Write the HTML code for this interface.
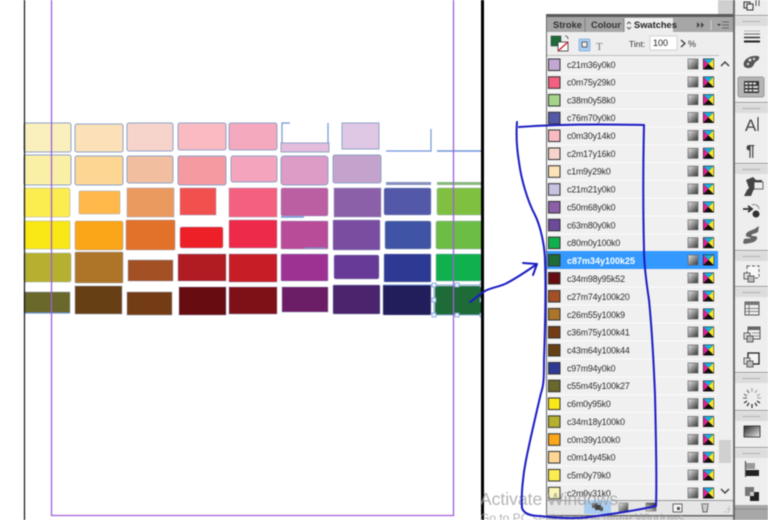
<!DOCTYPE html>
<html><head><meta charset="utf-8">
<style>
html,body{margin:0;padding:0;background:#fff;width:768px;height:520px;overflow:hidden}
svg{display:block;filter:blur(.45px)}
text{font-family:"Liberation Sans",sans-serif}
.n{font-size:8.8px;letter-spacing:-.15px;fill:#2c2c2c}
</style></head><body>
<svg width="768" height="520" viewBox="0 0 768 520" xmlns="http://www.w3.org/2000/svg">
<defs>
<linearGradient id="g" x1="0" y1="0" x2="1" y2="1"><stop offset="0" stop-color="#e8e8e8"/><stop offset="1" stop-color="#333"/></linearGradient>
<linearGradient id="g2" x1="0" y1="1" x2="1" y2="0"><stop offset="0" stop-color="#eee"/><stop offset="1" stop-color="#222"/></linearGradient>
<g id="ic">
<rect x="688" y="-5" width="10" height="10" fill="url(#g)" stroke="#666" stroke-width=".7"/>
<rect x="703" y="-5.500" width="11" height="11" fill="#111"/>
<polygon points="703.500,-5 708.500,0 703.500,5" fill="#e02090"/>
<polygon points="703.500,-5 713.500,-5 708.500,0" fill="#18b0e0"/>
<polygon points="713.500,-5 713.500,5 708.500,0" fill="#f8e820"/>
<polygon points="703.500,5 713.500,5 708.500,0" fill="#111"/>
</g>
</defs>

<!-- page -->
<rect x="0" y="0" width="546" height="520" fill="#fff"/>

<!-- colour grid -->
<g stroke="#8fa3c8" stroke-width="1">
<rect x="24" y="123" width="47" height="29" rx="2" fill="#faf0bd"/>
<rect x="75" y="124" width="48" height="28" rx="2" fill="#fbe0b8"/>
<rect x="127" y="123" width="46" height="28" rx="2" fill="#f6d4cb"/>
<rect x="178" y="123" width="48" height="27" rx="2" fill="#f9bac1"/>
<rect x="229" y="123" width="48" height="27" rx="2" fill="#f5a9bf"/>
<rect x="281" y="143" width="48" height="9" fill="#e4bcdc"/>
<rect x="342" y="123" width="37" height="26" fill="#dfc8e4"/>
<rect x="24" y="155" width="47" height="30" rx="2" fill="#faf0a5"/>
<rect x="75" y="156" width="48" height="29" rx="2" fill="#fdd694"/>
<rect x="127" y="156" width="46" height="27" rx="2" fill="#f1bfa0"/>
<rect x="178" y="156" width="48" height="29" rx="2" fill="#f59aa1"/>
<rect x="231" y="156" width="46" height="26" rx="2" fill="#f4a5bd"/>
<rect x="281" y="156" width="47" height="29" rx="3" fill="#dc9cc6"/>
<rect x="333" y="155" width="48" height="28" rx="2" fill="#c3a3cc"/>
</g>
<g fill="none" stroke="#6f96d8" stroke-width="1.2">
<path d="M290 123H282V143"/><path d="M328 123V143"/>
<path d="M386 151H431V129"/>
</g>
<path d="M437 151H482" stroke="#6f96d8" stroke-width="1.4"/>
<rect x="386" y="182" width="45" height="3" fill="#8890c0"/>
<rect x="437" y="182" width="45" height="3" fill="#88b880"/>

<g stroke="#8f9fc0" stroke-opacity=".55" stroke-width=".8">
<rect x="24" y="188" width="46" height="29" rx="2" fill="#fbec4f"/>
<rect x="79" y="191" width="41" height="23" rx="1" fill="#feb94a"/>
<rect x="127" y="188" width="47" height="29" fill="#eb9a5f"/>
<rect x="180" y="188" width="36" height="27" fill="#f1504f"/>
<rect x="229" y="188" width="48" height="29" fill="#f4607f"/>
<rect x="281" y="188" width="47" height="28" rx="2" fill="#bc5ea2"/>
<rect x="334" y="188" width="47" height="29" fill="#8c60a8"/>
<rect x="384" y="188" width="47" height="27" rx="2" fill="#5358a8"/>
<rect x="437" y="188" width="45" height="27" rx="2" fill="#80c040"/>

<rect x="24" y="221" width="46" height="28" rx="1" fill="#f9e815"/>
<rect x="75" y="221" width="48" height="29" rx="2" fill="#fba518"/>
<rect x="126" y="220" width="49" height="30" rx="1" fill="#e2712a"/>
<rect x="180" y="227" width="43" height="21" rx="2" fill="#ee2027"/>
<rect x="229" y="220" width="48" height="28" rx="1" fill="#ee2a4a"/>
<rect x="281" y="221" width="47" height="28" rx="1" fill="#b84c98"/>
<rect x="333" y="220" width="47" height="30" rx="1" fill="#7a4da0"/>
<rect x="385" y="221" width="46" height="28" rx="2" fill="#3f54a4"/>
<rect x="436" y="221" width="46" height="28" rx="2" fill="#6cbd45"/>

<rect x="24" y="253" width="47" height="29" rx="2" fill="#b5b02f"/>
<rect x="75" y="252" width="48" height="31" rx="1" fill="#ae7529"/>
<rect x="128" y="260" width="45" height="21" fill="#a35024"/>
<rect x="178" y="254" width="48" height="27" fill="#b01c22"/>
<rect x="229" y="254" width="48" height="28" fill="#c71d26"/>
<rect x="281" y="254" width="47" height="27" rx="1" fill="#9e3292"/>
<rect x="334" y="255" width="45" height="24" rx="2" fill="#663a96"/>
<rect x="384" y="254" width="47" height="28" rx="1" fill="#2d3a94"/>
<rect x="436" y="254" width="45" height="27" rx="1" fill="#10b04c"/>

<rect x="24" y="292" width="46" height="21" fill="#6a682a"/>
<rect x="75" y="286" width="47" height="28" fill="#673f14"/>
<rect x="127" y="292" width="45" height="23" fill="#743c14"/>
<rect x="179" y="287" width="47" height="28" fill="#670c0f"/>
<rect x="229" y="287" width="48" height="27" fill="#7e1018"/>
<rect x="282" y="287" width="46" height="25" fill="#6b1e66"/>
<rect x="333" y="285" width="47" height="29" rx="1" fill="#4a256e"/>
<rect x="383" y="285" width="48" height="30" rx="1" fill="#221e5c"/>
<rect x="435" y="286" width="47" height="29" fill="#1e6b38"/>
</g>
<path d="M24 313H70" stroke="#6f96d8" stroke-width="1.2"/>
<path d="M281 217H304" stroke="#6f96d8" stroke-width="1.4"/>
<path d="M305 248H326" stroke="#6f96d8" stroke-width="1"/>
<path d="M383 285H435" stroke="#6f96d8" stroke-width="1"/>
<rect x="434" y="285" width="48" height="30" fill="none" stroke="#8fb0e0" stroke-width="1"/>
<g fill="#eef3fb" stroke="#7da0d8" stroke-width=".8">
<rect x="432" y="283" width="4" height="4"/><rect x="455" y="283" width="4" height="4"/><rect x="480" y="283" width="4" height="4"/>
<rect x="432" y="298" width="4" height="4"/><rect x="480" y="298" width="4" height="4"/>
<rect x="432" y="313" width="4" height="4"/><rect x="455" y="313" width="4" height="4"/><rect x="480" y="313" width="4" height="4"/>
</g>

<!-- page guides -->
<path d="M24.500 0V520" stroke="#111" stroke-width="1.2"/>
<path d="M51.500 0V515.500H453.500V0" fill="none" stroke="#9f5fd8" stroke-width="1.300"/>
<rect x="481" y="0" width="3" height="520" fill="#000"/>

<!-- panel backdrop -->
<rect x="484" y="0" width="62" height="520" fill="#fff"/>
<rect x="718" y="0" width="16" height="14" fill="#cfcfcf"/>
<rect x="546" y="14" width="188" height="3" fill="#5a5a5a"/>
<rect x="546" y="17" width="188" height="15" fill="#a6a6a6"/>
<rect x="546" y="17" width="1" height="499" fill="#666"/>
<rect x="624" y="18" width="49" height="14" fill="#eeeeee"/>
<path d="M585 18V32M624 18V32" stroke="#777" stroke-width=".8"/>
<text x="553" y="28" font-size="9.300" font-weight="bold" fill="#333">Stroke</text>
<text x="591" y="28" font-size="9.300" font-weight="bold" fill="#333">Colour</text>
<text x="634" y="28" font-size="9.300" font-weight="bold" fill="#222">Swatches</text>
<path d="M627 24L629 22L631 24M627 27L629 29L631 27" fill="none" stroke="#333" stroke-width=".8"/>
<path d="M697 22l3 3-3 3zM701 22l3 3-3 3z" fill="#444"/>
<path d="M711 20V30" stroke="#ddd" stroke-width=".8"/>
<path d="M717 24l2 2 2-2z" fill="#333"/>
<path d="M722 22h7M722 25h7M722 28h7" stroke="#555" stroke-width=".8"/>

<rect x="547" y="32" width="172" height="23" fill="#eeeeee"/>
<rect x="719" y="32" width="15" height="23" fill="#eeeeee"/>
<rect x="551" y="36" width="10" height="10" fill="#1e6b38" stroke="#333" stroke-width=".5"/>
<rect x="558" y="42" width="10" height="9" fill="#fff" stroke="#333" stroke-width=".8"/>
<path d="M558 51L568 42" stroke="#d02030" stroke-width="1.400"/>
<path d="M565 36q3 0 3 3" fill="none" stroke="#333" stroke-width=".8"/>
<rect x="579" y="39" width="11" height="12" rx="1" fill="#a9cdf0" stroke="#7ea9dc" stroke-width=".7"/>
<rect x="582" y="42" width="5" height="5" fill="#eee" stroke="#444" stroke-width=".8"/>
<text x="596" y="50" font-size="11" fill="#777" style="font-family:'Liberation Serif',serif">T</text>
<text x="629" y="47" font-size="8.500" fill="#333">Tint:</text>
<rect x="650" y="36" width="27" height="14" fill="#fff" stroke="#c4c4c4" stroke-width=".7"/>
<text x="653" y="46" font-size="9" fill="#222">100</text>
<path d="M681 40l4 3.500-4 3.500" fill="none" stroke="#333" stroke-width="1.200"/>
<text x="688" y="47" font-size="9" fill="#333">%</text>

<!-- list -->
<rect x="547" y="55" width="172" height="445" fill="#f0f0f0"/>
<rect x="547" y="55" width="172" height="1" fill="#bdbdbd"/>
<rect x="719" y="55" width="15" height="445" fill="#efefef"/>
<path d="M547 73.500H718M547 91H718M547 109H718M547 127H718M547 144.700H718M547 162.500H718M547 180.400H718M547 198.300H718M547 216H718M547 234H718M547 287H718M547 305H718M547 323H718M547 341H718M547 359H718M547 377H718M547 394.700H718M547 412.500H718M547 430.400H718M547 448.300H718M547 466H718M547 484H718" stroke="#fbfbfb" stroke-width="1"/>
<rect x="547" y="251" width="171" height="18" fill="#3399ff"/>
<rect x="719" y="440" width="12" height="23" fill="#d0d0d0"/>
<path d="M721 66l4-4 4 4" fill="none" stroke="#444" stroke-width="1.500"/>
<path d="M721 489l4 4 4-4" fill="none" stroke="#444" stroke-width="1.500"/>

<g stroke="#333" stroke-width="1">
<rect x="548.500" y="59" width="11.500" height="11.500" fill="#c4a8d4"/>
<rect x="548.500" y="76.800" width="11.500" height="11.500" fill="#f4607f"/>
<rect x="548.500" y="94.500" width="11.500" height="11.500" fill="#a4d488"/>
<rect x="548.500" y="112.300" width="11.500" height="11.500" fill="#5358a8"/>
<rect x="548.500" y="130" width="11.500" height="11.500" fill="#f9bac1"/>
<rect x="548.500" y="148" width="11.500" height="11.500" fill="#f6d4cb"/>
<rect x="548.500" y="165.800" width="11.500" height="11.500" fill="#fde3b8"/>
<rect x="548.500" y="183.700" width="11.500" height="11.500" fill="#c9c3e3"/>
<rect x="548.500" y="201.500" width="11.500" height="11.500" fill="#8c60a8"/>
<rect x="548.500" y="219.300" width="11.500" height="11.500" fill="#6c4a9c"/>
<rect x="548.500" y="237.100" width="11.500" height="11.500" fill="#10b04c"/>
<rect x="548.500" y="254.500" width="11.500" height="11.500" fill="#1e6b38"/>
<rect x="548.500" y="272.500" width="11.500" height="11.500" fill="#670c0f"/>
<rect x="548.500" y="290.500" width="11.500" height="11.500" fill="#a35024"/>
<rect x="548.500" y="308.500" width="11.500" height="11.500" fill="#ae7529"/>
<rect x="548.500" y="326.500" width="11.500" height="11.500" fill="#743c14"/>
<rect x="548.500" y="344.500" width="11.500" height="11.500" fill="#673f14"/>
<rect x="548.500" y="362.500" width="11.500" height="11.500" fill="#2d3a94"/>
<rect x="548.500" y="380.200" width="11.500" height="11.500" fill="#6a682a"/>
<rect x="548.500" y="398" width="11.500" height="11.500" fill="#f9e815"/>
<rect x="548.500" y="415.900" width="11.500" height="11.500" fill="#b5b02f"/>
<rect x="548.500" y="433.800" width="11.500" height="11.500" fill="#fba518"/>
<rect x="548.500" y="451.500" width="11.500" height="11.500" fill="#fdd694"/>
<rect x="548.500" y="469.500" width="11.500" height="11.500" fill="#fbec4f"/>
<rect x="548.500" y="487.300" width="11.500" height="11.500" fill="#faf5b5"/>
</g>

<text class="n" x="567" y="68">c21m36y0k0</text>
<text class="n" x="567" y="85.500">c0m75y29k0</text>
<text class="n" x="567" y="103.500">c38m0y58k0</text>
<text class="n" x="567" y="121">c76m70y0k0</text>
<text class="n" x="567" y="139">c0m30y14k0</text>
<text class="n" x="567" y="157">c2m17y16k0</text>
<text class="n" x="567" y="174.500">c1m9y29k0</text>
<text class="n" x="567" y="192.500">c21m21y0k0</text>
<text class="n" x="567" y="210.500">c50m68y0k0</text>
<text class="n" x="567" y="228.500">c63m80y0k0</text>
<text class="n" x="567" y="246">c80m0y100k0</text>
<text x="567" y="264" font-size="9" font-weight="bold" fill="#fff">c87m34y100k25</text>
<text class="n" x="567" y="282">c34m98y95k52</text>
<text class="n" x="567" y="300">c27m74y100k20</text>
<text class="n" x="567" y="318">c26m55y100k9</text>
<text class="n" x="567" y="335.500">c36m75y100k41</text>
<text class="n" x="567" y="353.500">c43m64y100k44</text>
<text class="n" x="567" y="371.500">c97m94y0k0</text>
<text class="n" x="567" y="389">c55m45y100k27</text>
<text class="n" x="567" y="407">c6m0y95k0</text>
<text class="n" x="567" y="425">c34m18y100k0</text>
<text class="n" x="567" y="443">c0m39y100k0</text>
<text class="n" x="567" y="460.500">c0m14y45k0</text>
<text class="n" x="567" y="478.500">c5m0y79k0</text>
<text class="n" x="567" y="496.500">c2m0y31k0</text>

<use href="#ic" y="64"/><use href="#ic" y="82"/><use href="#ic" y="99.700"/><use href="#ic" y="117.500"/><use href="#ic" y="135.500"/><use href="#ic" y="153.300"/><use href="#ic" y="171.200"/><use href="#ic" y="189"/><use href="#ic" y="207"/><use href="#ic" y="224.800"/><use href="#ic" y="242.700"/><use href="#ic" y="260"/><use href="#ic" y="278"/><use href="#ic" y="296"/><use href="#ic" y="314"/><use href="#ic" y="332"/><use href="#ic" y="350"/><use href="#ic" y="368"/><use href="#ic" y="386"/><use href="#ic" y="403.700"/><use href="#ic" y="421.500"/><use href="#ic" y="439.500"/><use href="#ic" y="457.300"/><use href="#ic" y="475"/><use href="#ic" y="493"/>

<!-- footer -->
<rect x="547" y="500" width="187" height="15" fill="#e6e6e6"/>
<rect x="547" y="500" width="187" height="1" fill="#999"/>
<rect x="584" y="500" width="27" height="14" fill="#a9cdf0"/>
<rect x="592" y="503" width="6" height="5" fill="#666"/><rect x="595" y="505" width="6" height="5" fill="#444"/><rect x="600" y="507" width="3" height="4" fill="#555"/>
<rect x="619" y="503" width="9" height="9" fill="url(#g)" stroke="#666" stroke-width=".5"/>
<rect x="646" y="503" width="10" height="8" fill="url(#g2)" stroke="#555" stroke-width=".5"/>
<rect x="673" y="504" width="9" height="8" fill="#f4f4f4" stroke="#444" stroke-width=".8"/><rect x="677" y="507" width="3" height="3" fill="#555"/>
<path d="M701 504h8M702 505l1 7h4l1-7" fill="#ccc" stroke="#444" stroke-width=".8"/>
<path d="M724 512h6M727 509h3M729 506v6" stroke="#999" stroke-width=".8" stroke-dasharray="1 1"/>
<rect x="546" y="515" width="188" height="1.500" fill="#666"/>
<rect x="546" y="516.500" width="188" height="4" fill="#d6d6d6"/>

<!-- right dock -->
<rect x="733" y="0" width="2" height="520" fill="#6c6c6c"/>
<rect x="735" y="0" width="33" height="520" fill="#eeeeee"/>
<g fill="#dcdcdc">
<rect x="735" y="17" width="33" height="9"/><rect x="735" y="104" width="33" height="9"/><rect x="735" y="165" width="33" height="9"/><rect x="735" y="252" width="33" height="9"/><rect x="735" y="288" width="33" height="9"/><rect x="735" y="374" width="33" height="9"/><rect x="735" y="412" width="33" height="9"/><rect x="735" y="449" width="33" height="9"/>
</g>
<g stroke="#9a9a9a" stroke-width="1">
<path d="M735 15.500H768M735 102.500H768M735 163.500H768M735 250.500H768M735 286.500H768M735 372.500H768M735 410.500H768M735 447.500H768"/>
</g>
<g stroke="#888" stroke-width="1" stroke-dasharray="1 1">
<path d="M743 21.500H760M743 108.500H760M743 169.500H760M743 256.500H760M743 292.500H760M743 378.500H760M743 416.500H760M743 453.500H760"/>
</g>
<rect x="735" y="505" width="33" height="15" fill="#a8a8a8"/>
<path d="M735 509H768" stroke="#8a8a8a"/>

<!-- dock icons -->
<rect x="744" y="2" width="6" height="6" fill="#ddd" stroke="#333"/><rect x="747" y="4" width="6" height="6" fill="#eee" stroke="#333"/><path d="M756 0V6M759 0V6" stroke="#555"/>
<path d="M744 31H760" stroke="#bbb" stroke-width="1"/><path d="M744 34H760" stroke="#666" stroke-width="1"/><path d="M744 37.500H760" stroke="#333" stroke-width="1.500"/><path d="M744 41.500H760" stroke="#222" stroke-width="2"/>
<path d="M744 66c-2-6 6-11 13-10 4 0 2 4 0 5-3 1-3 5-5 6-3 2-7 1-8-1z" fill="#555"/><circle cx="750" cy="60" r="1.500" fill="#ddd"/><circle cx="754" cy="59" r="1.200" fill="#ddd"/><circle cx="748" cy="64" r="1.200" fill="#ddd"/>
<rect x="738" y="77" width="26" height="20" rx="2" fill="#b4b4b4" stroke="#999"/>
<rect x="744" y="81" width="15" height="12" fill="#333"/>
<path d="M745 82.500h3v2h-3zM749 82.500h3v2h-3zM753 82.500h3v2h-3zM745 86h3v2h-3zM749 86h3v2h-3zM753 86h5v2h-5zM745 89.500h3v2h-3zM749 89.500h3v2h-3zM753 89.500h5v2h-5z" fill="#ddd"/>
<text x="745" y="131" font-size="17" fill="#444">A</text><path d="M758 117V131" stroke="#222" stroke-width="1"/>
<text x="746" y="156" font-size="16" font-weight="bold" fill="#444">¶</text>
<path d="M746 180l7-3 3 3 6 0v8h-7l-2 3-2 5h-7l3-6 2-2z" fill="#444"/><rect x="754" y="182" width="9" height="7" fill="#eee" stroke="#444" stroke-width=".8"/>
<path d="M743 209h8M748 206l4 3-4 3" fill="none" stroke="#333" stroke-width="1.800"/><circle cx="756" cy="214" r="3.500" fill="#333"/><path d="M752 205a5 5 0 0 1 7 4" fill="none" stroke="#888"/>
<path d="M746 236c-1-5 6-5 10-8l3-2-1 6c-3 2-8 2-6 4 3 0 6 0 5 3-2 4-8 4-12 5l-2-1 1-4c3-1 6 0 7-1-2-1-4-1-5-2z" fill="#666"/>
<rect x="747" y="266" width="12" height="12" fill="#f8f8f8" stroke="#555" stroke-dasharray="3 2" stroke-width=".9"/><rect x="744" y="273" width="6" height="6" fill="#ddd" stroke="#555" stroke-width=".9"/><rect x="748" y="276" width="6" height="6" fill="#bbb" stroke="#555" stroke-width=".9"/>
<rect x="745" y="302" width="14" height="13" fill="#eee" stroke="#555" stroke-width="1"/><rect x="745" y="302" width="14" height="3" fill="#777"/><path d="M745 308.500H759M745 311.500H759M749 305V315" stroke="#666" stroke-width=".8"/>
<rect x="748" y="327" width="12" height="12" fill="#eee" stroke="#555"/><rect x="748" y="327" width="12" height="3" fill="#666"/><path d="M752 333H760M752 336H760" stroke="#777" stroke-width=".8"/><rect x="744" y="333" width="6" height="6" fill="#ddd" stroke="#555" stroke-width=".9"/><rect x="747" y="336" width="6" height="6" fill="#bbb" stroke="#555" stroke-width=".9"/>
<rect x="748" y="353" width="11" height="11" fill="#f4f4f4" stroke="#222" stroke-width="1.300"/><rect x="744" y="358" width="6" height="6" fill="#ddd" stroke="#555" stroke-width=".9"/><rect x="747" y="361" width="6" height="6" fill="#bbb" stroke="#555" stroke-width=".9"/>
<g stroke="#555" stroke-width="1.300">
<path d="M752 388v4M757 390l-2 3M760 394l-3 2M761 398h-4" stroke="#aaa"/><path d="M760 403l-3-2M757 406l-2-3M752 408v-4M747 406l2-3M744 403l3-2" stroke="#333"/><path d="M743 398h4M744 394l3 2M747 390l2 3" stroke="#777"/>
</g>
<rect x="744" y="426" width="16" height="11" fill="url(#g2)" stroke="#222" stroke-width=".8" transform="matrix(-1 0 0 1 1504 0)"/>
<path d="M745.500 461V477" stroke="#555" stroke-width="1.200"/><rect x="746" y="463" width="9" height="6" fill="#999"/><rect x="746" y="470" width="13" height="6" fill="#222"/>
<rect x="745" y="487" width="9" height="9" fill="#777"/><rect x="750" y="492" width="9" height="9" fill="#222"/><rect x="750" y="492" width="4" height="4" fill="#ccc"/>

<!-- watermark -->
<text x="480" y="505" font-size="17.500" fill="#9a9a9a" fill-opacity=".75">Activate Windows</text>
<text x="480" y="522" font-size="12" fill="#9a9a9a" fill-opacity=".75">Go to PC settings to activate Windows.</text>

<!-- hand-drawn ink -->
<g fill="none" stroke="#1c1cc4" stroke-width="2" stroke-linecap="round" stroke-linejoin="round">
<path d="M517 122C516 135 517 150 519 162C521 178 527 200 535 215C540 225 545 245 545 262C546 290 545 330 544 360C544 375 544 385 541 393C537 410 530 440 526 460C523 475 521 495 522 508C524 514 531 516 540 516C555 518 575 519 590 517C610 514 635 511 656 506C657 480 656 440 655 395C654 370 652 330 649 300C646 280 644 265 644 250C643 210 643 170 644 125C600 124 560 124 519 127"/>
<path d="M470 302C476 298 480 294 485 291C490 288 498 287 505 284C515 279 527 271 537 264"/>
<path d="M523 263L537 264L533 275"/>
</g>
</svg>
</body></html>
